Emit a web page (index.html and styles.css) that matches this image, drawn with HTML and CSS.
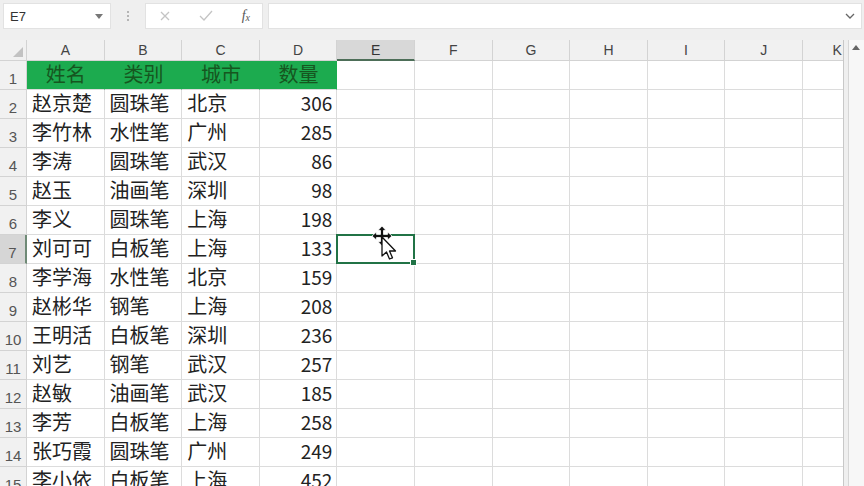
FILE: index.html
```html
<!DOCTYPE html>
<html lang="zh-CN">

<head>
    <meta charset="UTF-8">
    <title>数量表</title>
    <link rel="stylesheet" href="styles.css">
</head>

<body>

    <div class="toolbar">
        <div class="namebox">
            <span>E7</span>
            <svg class="drop" width="8" height="5" viewBox="0 0 8 5"><path d="M0 0 L8 0 L4 5 Z" fill="#777"/></svg>
        </div>
        <div class="grip">
            <span></span><span></span><span></span>
        </div>
        <div class="fxbox">
            <svg width="12" height="12" viewBox="0 0 12 12"><path d="M2 2 L10 10 M10 2 L2 10" stroke="#c4c4c4" stroke-width="1.3" fill="none"/></svg>
            <svg width="14" height="12" viewBox="0 0 14 12"><path d="M1 6 L5 10 L13 1" stroke="#c4c4c4" stroke-width="1.3" fill="none"/></svg>
            <span class="fx">f<sub>x</sub></span>
        </div>
        <div class="formula">
            <svg width="10" height="6" viewBox="0 0 10 6"><path d="M1 1 L5 5 L9 1" stroke="#666" stroke-width="1.3" fill="none"/></svg>
        </div>
    </div>

    <div class="sheet">
        <div class="grid" id="grid"></div>
        <div class="scrollbar">
            <svg width="8" height="5" viewBox="0 0 8 5"><path d="M0 5 L8 5 L4 0 Z" fill="#666"/></svg>
        </div>
    </div>

    <svg class="cursor" width="26" height="36" viewBox="0 0 26 36">
        <path d="M10 0 L14 4.5 H11.5 V8.5 H15.5 V6 L20 10 L15.5 14 V11.5 H11.5 V15.5 H14 L10 20 L6 15.5 H8.5 V11.5 H4.5 V14 L0 10 L4.5 6 V8.5 H8.5 V4.5 H6 Z" fill="#111" stroke="#fff" stroke-width="0.8"/>
        <path d="M10 11 V30 L14.5 26 L17.5 33 L20.5 31.8 L17.5 25 L23.5 25 Z" fill="#fff" stroke="#111" stroke-width="1.3" stroke-linejoin="round"/>
    </svg>

    <script>
        const data = [
            ["姓名", "类别", "城市", "数量"],
            ["赵京楚", "圆珠笔", "北京", 306],
            ["李竹林", "水性笔", "广州", 285],
            ["李涛", "圆珠笔", "武汉", 86],
            ["赵玉", "油画笔", "深圳", 98],
            ["李义", "圆珠笔", "上海", 198],
            ["刘可可", "白板笔", "上海", 133],
            ["李学海", "水性笔", "北京", 159],
            ["赵彬华", "钢笔", "上海", 208],
            ["王明活", "白板笔", "深圳", 236],
            ["刘艺", "钢笔", "武汉", 257],
            ["赵敏", "油画笔", "武汉", 185],
            ["李芳", "白板笔", "上海", 258],
            ["张巧霞", "圆珠笔", "广州", 249],
            ["李小依", "白板笔", "上海", 452]
        ];
        const cols = ["A", "B", "C", "D", "E", "F", "G", "H", "I", "J", "K"];
        const grid = document.getElementById("grid");

        function cell(cls, text) {
            const div = document.createElement("div");
            div.className = cls;
            if (text !== undefined) div.textContent = text;
            grid.appendChild(div);
            return div;
        }

        cell("corner").innerHTML = '<svg width="10" height="10" viewBox="0 0 10 10"><path d="M10 0 L10 10 L0 10 Z" fill="#c2c2c2"/></svg>';
        cols.forEach(c => {
            const h = cell("colhead" + (c === "E" ? " active" : ""), c);
            if (c === "K") h.classList.add("right");
        });

        data.forEach((row, i) => {
            const r = i + 1;
            cell("rowhead" + (r === 7 ? " active" : ""), r);
            cols.forEach((c, j) => {
                let cls = "cell";
                let text = row[j];
                if (r === 1 && j < 4) cls += " title";
                else if (typeof text === "number") cls += " num";
                if (r === 7 && c === "E") cls += " selected";
                cell(cls, text);
            });
        });
    </script>

</body>

</html>
```

FILE: styles.css
```css
body {
    margin: 0;
    background-color: #efefef;
    font-family: "Noto Sans CJK SC", "Noto Sans", sans-serif;
    width: 864px;
    height: 486px;
    overflow: hidden;
    position: relative;
}

.toolbar {
    height: 40px;
    display: flex;
    align-items: flex-start;
    padding: 3px 2px 0 3px;
    box-sizing: border-box;
}

.namebox {
    width: 108px;
    height: 26px;
    background: white;
    border: 1px solid #e2e2e2;
    box-sizing: border-box;
    display: flex;
    align-items: center;
    justify-content: space-between;
    padding: 0 7px 0 6px;
    font-family: "Liberation Sans", sans-serif;
    font-size: 13px;
    color: #333;
}

.grip {
    width: 34px;
    height: 26px;
    display: flex;
    flex-direction: column;
    justify-content: center;
    align-items: center;
    gap: 2px;
}

.grip span {
    width: 2px;
    height: 2px;
    background: #b5b5b5;
}

.fxbox {
    width: 118px;
    height: 26px;
    background: white;
    border: 1px solid #e2e2e2;
    box-sizing: border-box;
    display: flex;
    align-items: center;
    justify-content: space-between;
    padding: 0 12px 0 13px;
}

.fx {
    font-family: "Liberation Serif", serif;
    font-style: italic;
    font-size: 14px;
    color: #555;
}

.fx sub {
    font-size: 10px;
    vertical-align: -1px;
}

.formula {
    flex: 1;
    height: 26px;
    margin-left: 5px;
    background: white;
    border: 1px solid #e2e2e2;
    box-sizing: border-box;
    display: flex;
    align-items: center;
    justify-content: flex-end;
    padding-right: 6px;
}

.sheet {
    display: flex;
    align-items: flex-start;
}

.grid {
    display: grid;
    grid-template-columns: 27px repeat(10, 77.6px) 40px;
    grid-template-rows: 21px repeat(15, 29px);
    background: white;
    border-right: 1px solid #c8c8c8;
}

.corner,
.colhead,
.rowhead {
    background: #f1f1f1;
    color: #444;
    box-sizing: border-box;
    border-right: 1px solid #d3d3d3;
    border-bottom: 1px solid #d3d3d3;
    font-family: "Liberation Sans", sans-serif;
}

.corner {
    display: flex;
    align-items: flex-end;
    justify-content: flex-end;
    padding: 0 3px 3px 0;
}

.colhead {
    display: flex;
    align-items: center;
    justify-content: center;
    font-size: 14px;
}

.colhead.right {
    justify-content: flex-end;
    padding-right: 1px;
    border-right: none;
}

.colhead.active {
    background: #d8d8d8;
    border-bottom: 2px solid #4d6e58;
    color: #333;
}

.rowhead {
    display: flex;
    align-items: flex-end;
    justify-content: center;
    padding-bottom: 2px;
    font-size: 15px;
    color: #555;
}

.rowhead.active {
    background: #d6d6d6;
    border-right: 2px solid #6f8a76;
}

.cell {
    box-sizing: border-box;
    border-right: 1px solid #dcdcdc;
    border-bottom: 1px solid #dcdcdc;
    display: flex;
    align-items: center;
    padding: 0 4px 2px 5px;
    font-size: 20px;
    line-height: 24px;
    color: #222;
    white-space: nowrap;
}

.cell:nth-child(12n) {
    border-right: none;
}

.cell.num {
    justify-content: flex-end;
    font-size: 19px;
}

.cell.title {
    background: #1cab4f;
    color: #16561f;
    justify-content: center;
    border-right-color: #1cab4f;
}

.cell.selected {
    position: relative;
    border: 2px solid #217346;
    margin: -1px 0 0 -1px;
}

.cell.selected::after {
    content: "";
    position: absolute;
    right: -4px;
    bottom: -4px;
    width: 5px;
    height: 5px;
    background: #217346;
    border: 1px solid white;
}

.scrollbar {
    width: 16px;
    height: 446px;
    margin-left: 4px;
    background: #f7f7f7;
    border-left: 1px solid #d6d6d6;
    display: flex;
    justify-content: center;
    padding-top: 5px;
    box-sizing: border-box;
}

.cursor {
    position: absolute;
    left: 372px;
    top: 226px;
}
```
